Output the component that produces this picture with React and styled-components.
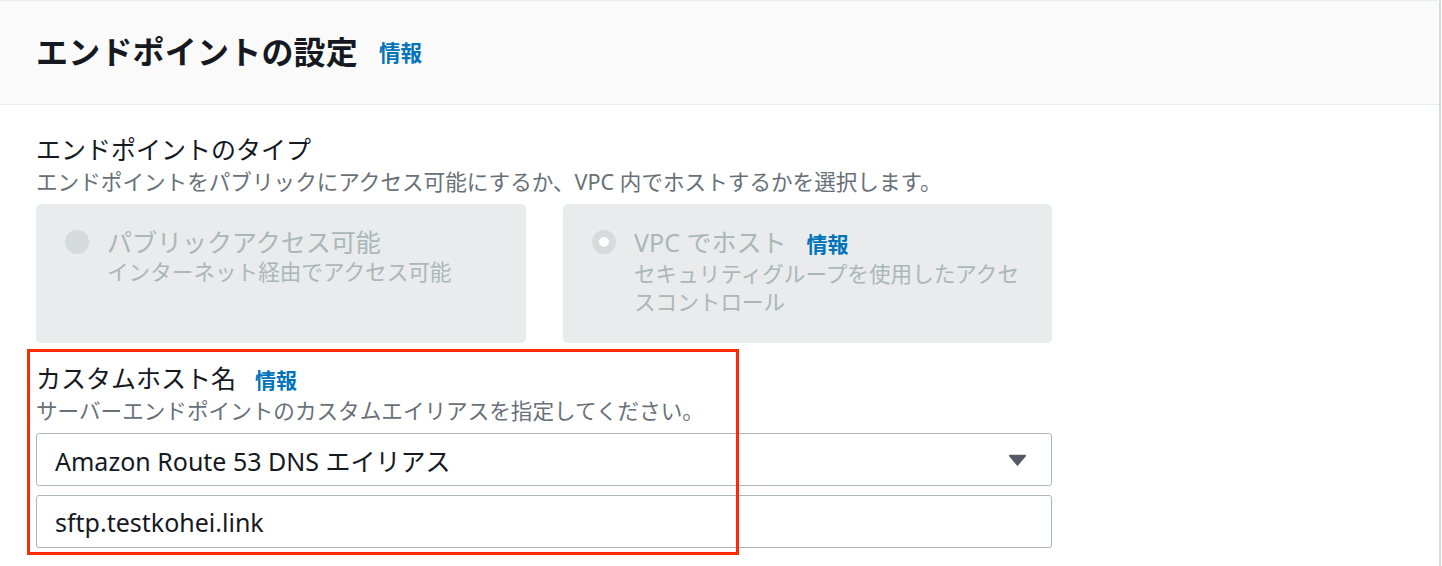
import React from 'react'
import styled, { createGlobalStyle } from 'styled-components'

const GlobalStyle = createGlobalStyle`
  html, body {
    margin: 0;
    padding: 0;
    background: #ffffff;
  }
  body {
    font-family: "Noto Sans", "Noto Sans CJK JP", sans-serif;
    color: #16191f;
  }
`

const endpointTypes = [
    {
        id: 'public',
        title: 'パブリックアクセス可能',
        description: 'インターネット経由でアクセス可能',
        checked: false,
        info: false
    },
    {
        id: 'vpc',
        title: 'VPC でホスト',
        description: 'セキュリティグループを使用したアクセスコントロール',
        checked: true,
        info: true
    }
]

function RadioCard({ option }) {
    return (
        <Card>
            <RadioDot checked={option.checked} />
            <CardText>
                <CardTitle>
                    {option.title}
                    {option.info ? <InfoLink href="#" spacing="20px">情報</InfoLink> : null}
                </CardTitle>
                <CardDescription>{option.description}</CardDescription>
            </CardText>
        </Card>
    )
}

function App() {
    return (
        <Container>
            <GlobalStyle />
            <Header>
                <Heading>エンドポイントの設定</Heading>
                <InfoLink href="#" spacing="21px" size="21.5px">情報</InfoLink>
            </Header>
            <Content>
                <Field>
                    <Label>エンドポイントのタイプ</Label>
                    <Description>エンドポイントをパブリックにアクセス可能にするか、VPC 内でホストするかを選択します。</Description>
                    <CardGrid>
                        {endpointTypes.map(option => <RadioCard key={option.id} option={option} />)}
                    </CardGrid>
                </Field>
                <Highlighted>
                    <Label>
                        カスタムホスト名
                        <InfoLink href="#" spacing="19px">情報</InfoLink>
                    </Label>
                    <Description compact>サーバーエンドポイントのカスタムエイリアスを指定してください。</Description>
                    <Select>
                        <span>Amazon Route 53 DNS エイリアス</span>
                        <Caret viewBox="0 0 20 14" aria-hidden="true">
                            <path d="M2 1.5 H18 a1 1 0 0 1 0.8 1.6 L10.8 12.6 a1 1 0 0 1 -1.6 0 L1.2 3.1 A1 1 0 0 1 2 1.5 Z" />
                        </Caret>
                    </Select>
                    <TextInput readOnly value="sftp.testkohei.link" />
                    <RedMark />
                </Highlighted>
            </Content>
        </Container>
    )
}
export default App

const Container = styled.div`
    width: 1441px;
    min-height: 566px;
    box-sizing: border-box;
    border-top: 1px solid #eaeded;
    border-right: 2px solid #d5dbdb;
    background: #ffffff;
`
const Header = styled.div`
    height: 104px;
    box-sizing: border-box;
    display: flex;
    align-items: center;
    padding: 0 36px 2px 36px;
    background: #fafafa;
    border-bottom: 1px solid #eaeded;
`
const Heading = styled.h2`
    margin: 0;
    font-size: 32px;
    font-weight: 700;
    line-height: 40px;
    color: #16191f;
    letter-spacing: 0.2px;
`
const InfoLink = styled.a`
    margin-left: ${props => props.spacing || '16px'};
    font-size: ${props => props.size || '21px'};
    font-weight: 700;
    color: #0073bb;
    text-decoration: none;
`
const Content = styled.div`
    padding: 28px 36px 0 36px;
    width: 1016px;
    box-sizing: content-box;
`
const Field = styled.div`
    display: flex;
    flex-direction: column;
`
const Label = styled.div`
    font-size: 25px;
    line-height: 32px;
    color: #16191f;
`
const Description = styled.div`
    font-size: 21.6px;
    line-height: ${props => (props.compact ? '30px' : '34px')};
    color: #687078;
`
const CardGrid = styled.div`
    display: grid;
    grid-template-columns: 490px 489px;
    column-gap: 37px;
    margin-top: 5px;
`
const Card = styled.div`
    display: flex;
    align-items: flex-start;
    gap: 18px;
    padding: 22px 20px 27px 29px;
    background: #e9ebed;
    border-radius: 5px;
`
const RadioDot = styled.span`
    flex: none;
    width: 24px;
    height: 24px;
    margin-top: 4px;
    border-radius: 50%;
    box-sizing: border-box;
    background: ${props => (props.checked ? '#ffffff' : '#d5dbdb')};
    border: ${props => (props.checked ? '7px solid #d5dbdb' : 'none')};
`
const CardText = styled.div`
    display: flex;
    flex-direction: column;
    max-width: 395px;
`
const CardTitle = styled.div`
    font-size: 25px;
    line-height: 32px;
    color: #aab7b8;
`
const CardDescription = styled.div`
    font-size: 21.6px;
    line-height: 28px;
    color: #aab7b8;
`
const Highlighted = styled.div`
    position: relative;
    display: flex;
    flex-direction: column;
    margin-top: 19px;
`
const fieldBox = `
    box-sizing: border-box;
    width: 100%;
    height: 53px;
    padding: 0 24px 0 18px;
    border: 1px solid #aab7b8;
    border-radius: 3px;
    background: #ffffff;
    font-family: "Noto Sans", "Noto Sans CJK JP", sans-serif;
    font-size: 25px;
    color: #16191f;
`
const Select = styled.div`
    ${fieldBox}
    display: flex;
    align-items: center;
    justify-content: space-between;
    margin-top: 7px;
`
const Caret = styled.svg`
    width: 19px;
    height: 14px;
    fill: #545b64;
`
const TextInput = styled.input`
    ${fieldBox}
    display: block;
    margin-top: 9px;
    outline: none;
`
const RedMark = styled.div`
    position: absolute;
    top: -13px;
    left: -9px;
    width: 712px;
    bottom: -7px;
    box-sizing: border-box;
    border: 3px solid #fd2a04;
    pointer-events: none;
`
